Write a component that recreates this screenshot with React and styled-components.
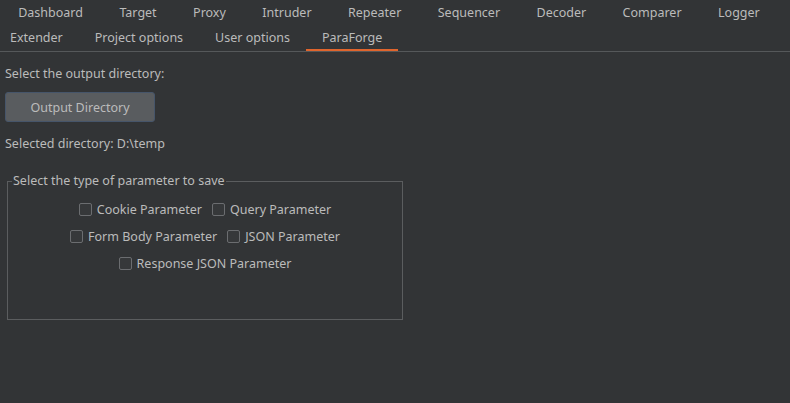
import React from 'react';
import styled, { createGlobalStyle } from 'styled-components';

const GlobalStyle = createGlobalStyle`
  html, body {
    margin: 0;
    padding: 0;
    background: #323436;
  }
  body {
    font-family: "Noto Sans", "Open Sans", sans-serif;
    font-size: 12.5px;
    color: #bbbbbb;
  }
`;

const Page = styled.div`
  width: 790px;
  height: 403px;
  background: #323436;
  overflow: hidden;
`;

const TabBar = styled.div`
  border-bottom: 1px solid #55585a;
`;

const TabRow = styled.div`
  display: flex;
  height: ${(p) => p.$h}px;
  padding-right: ${(p) => p.$right || 0}px;
  padding-top: ${(p) => p.$top || 0}px;
  box-sizing: border-box;
  align-items: stretch;
`;

const Tab = styled.div`
  flex: ${(p) => (p.$stretch ? '1 1 auto' : '0 0 auto')};
  display: flex;
  align-items: center;
  justify-content: center;
  padding: 0 ${(p) => (p.$stretch ? 12 : 16)}px;
  padding-left: ${(p) => (p.$first ? '10px' : undefined)};
  color: #bbbbbb;
  white-space: nowrap;
  box-sizing: border-box;
  border-bottom: 2px solid ${(p) => (p.$active ? '#e0652d' : 'transparent')};
`;

const Content = styled.div`
  padding: 13px 5px 0 5px;
`;

const Label = styled.div`
  line-height: 18px;
`;

const Button = styled.button`
  display: block;
  margin-top: 9px;
  width: 150px;
  height: 30px;
  background: #595c5f;
  border: 1px solid #46556a;
  border-radius: 3px;
  color: #bbbbbb;
  font-family: inherit;
  font-size: 12.5px;
  padding: 0;
`;

const Selected = styled(Label)`
  margin-top: 13px;
`;

const Group = styled.fieldset`
  margin: 20px 0 0 2px;
  width: 396px;
  height: 147px;
  box-sizing: border-box;
  border: 1px solid #5b5d5f;
  padding: 11px 0 0 0;
  display: flex;
  flex-direction: column;
  align-items: center;
  gap: 9px;
`;

const Legend = styled.legend`
  padding: 0 1px;
  margin-left: 4px;
  line-height: 16px;
`;

const CheckRow = styled.div`
  display: flex;
  gap: 10px;
  height: 18px;
  align-items: center;
`;

const Check = styled.label`
  display: flex;
  align-items: center;
  gap: 5px;
  white-space: nowrap;
`;

const Box = styled.span`
  width: 13px;
  height: 13px;
  box-sizing: border-box;
  border: 1px solid #6b6d70;
  border-radius: 2px;
  background: #36383a;
`;

const tabs1 = ['Dashboard', 'Target', 'Proxy', 'Intruder', 'Repeater', 'Sequencer', 'Decoder', 'Comparer', 'Logger'];
const tabs2 = ['Extender', 'Project options', 'User options', 'ParaForge'];

const rows = [
  ['Cookie Parameter', 'Query Parameter'],
  ['Form Body Parameter', 'JSON Parameter'],
  ['Response JSON Parameter'],
];

export default function App() {
  return (
    <Page>
      <GlobalStyle />
      <TabBar>
        <TabRow $h={26} $top={1} $right={12}>
          {tabs1.map((t) => (
            <Tab key={t} $stretch>{t}</Tab>
          ))}
        </TabRow>
        <TabRow $h={25}>
          {tabs2.map((t, i) => (
            <Tab key={t} $first={i === 0} $active={t === 'ParaForge'}>{t}</Tab>
          ))}
        </TabRow>
      </TabBar>
      <Content>
        <Label>Select the output directory:</Label>
        <Button>Output Directory</Button>
        <Selected>Selected directory: D:\temp</Selected>
        <Group>
          <Legend>Select the type of parameter to save</Legend>
          {rows.map((r, i) => (
            <CheckRow key={i}>
              {r.map((c) => (
                <Check key={c}>
                  <Box />
                  {c}
                </Check>
              ))}
            </CheckRow>
          ))}
        </Group>
      </Content>
    </Page>
  );
}
